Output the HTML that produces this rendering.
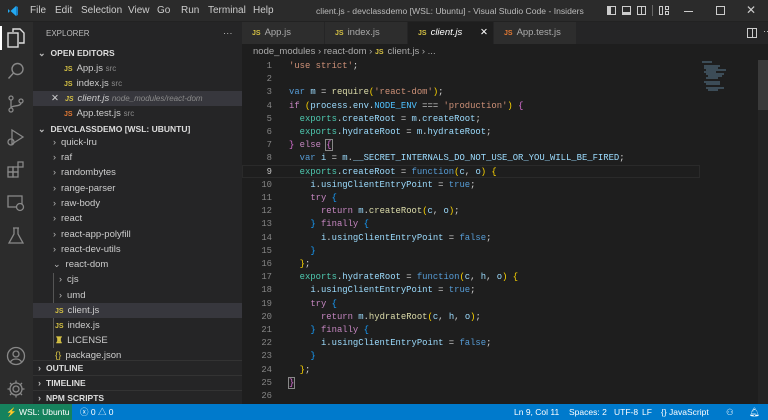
<!DOCTYPE html>
<html><head><meta charset="utf-8"><style>
*{margin:0;padding:0;box-sizing:border-box}
body{width:768px;height:420px;overflow:hidden;background:#1e1e1e;font-family:"Liberation Sans",sans-serif;color:#ccc;position:relative;font-size:9px}
.abs{position:absolute}
#title{left:0;top:0;width:768px;height:22px;background:#2b2b2b;border-bottom:1px solid #222}
#title span.m{position:absolute;top:5px;font-size:10px;color:#ccc}
#act{left:0;top:22px;width:33px;height:382px;background:#2c2c2c}
#side{left:33px;top:22px;width:209px;height:382px;background:#252526}
.row{position:absolute;left:0;width:209px;height:15px;line-height:15px;font-size:9.5px;color:#ccc;white-space:nowrap}
.hdr{font-weight:bold;font-size:8.5px;color:#ddd}
.js{color:#d5c144;font-weight:bold;font-size:7px;margin-right:4px}
.chev{color:#bbb;margin-right:5px;font-size:9px}
.dim{color:#8a8a8a;font-size:8px}
#tabs{left:242px;top:22px;width:526px;height:22px;background:#252526}
.tab{position:absolute;top:0;height:22px;line-height:22px;font-size:9.5px;background:#2d2d2d;color:#aaa;padding-left:10px}
#code{left:242px;top:60px;font-family:"Liberation Mono",monospace;font-size:8.9px;line-height:13.2px;white-space:pre}
.ln{position:absolute;left:0;width:30px;text-align:right;color:#858585}
.cl{position:absolute;left:47px}
.k{color:#569cd6}.p{color:#c586c0}.s{color:#ce9178}.v{color:#9cdcfe}.f{color:#dcdcaa}.t{color:#4ec9b0}.c{color:#4fc1ff}.y{color:#ffd700}.w{color:#d4d4d4}.bl{color:#179fff}.pk{color:#da70d6}
#status{left:0;top:404px;width:768px;height:16px;background:#007acc;font-size:8.5px;color:#fff;line-height:16px}
</style></head><body>
<div id="title" class="abs">
<svg class="abs" style="left:7px;top:5px" width="12" height="12" viewBox="0 0 12 12"><path d="M9 1L3.5 6 9 11V1zM1 4l2 2-2 2z" fill="#23a9f2"/><path d="M9 1l2 1v8l-2 1z" fill="#1b80c4"/></svg>
<span class="m" style="left:30px">File</span><span class="m" style="left:55px">Edit</span><span class="m" style="left:81px">Selection</span><span class="m" style="left:128px">View</span><span class="m" style="left:157px">Go</span><span class="m" style="left:181px">Run</span><span class="m" style="left:208px">Terminal</span><span class="m" style="left:253px">Help</span>
<span class="m" style="left:316px;color:#bbb;font-size:8.6px;top:6px">client.js - devclassdemo [WSL: Ubuntu] - Visual Studio Code - Insiders</span>
<div class="abs" style="left:607px;top:6px;width:9px;height:9px;border:1px solid #ccc;border-left:4px solid #ccc"></div>
<div class="abs" style="left:622px;top:6px;width:9px;height:9px;border:1px solid #ccc;border-bottom:3px solid #ccc"></div>
<div class="abs" style="left:637px;top:6px;width:9px;height:9px;border:1px solid #ccc"></div><div class="abs" style="left:641px;top:6px;width:1px;height:9px;background:#ccc"></div>
<div class="abs" style="left:652px;top:5px;width:1px;height:11px;background:#666"></div>
<div class="abs" style="left:659px;top:6px;width:4px;height:9px;border:1px solid #ccc"></div><div class="abs" style="left:665px;top:6px;width:4px;height:4px;border:1px solid #ccc"></div><div class="abs" style="left:665px;top:11px;width:4px;height:4px;border:1px solid #ccc"></div>
<div class="abs" style="left:684px;top:11px;width:9px;height:1px;background:#ccc"></div>
<div class="abs" style="left:716px;top:6px;width:9px;height:9px;border:1px solid #ccc"></div>
<span class="m" style="left:746px;top:3px;font-size:12px">✕</span>
</div>
<div id="act" class="abs">
<div class="abs" style="left:0;top:4px;width:2px;height:24px;background:#fff"></div>
<svg class="abs" style="left:7px;top:6px" width="18" height="20" viewBox="0 0 18 20" fill="none" stroke="#ddd" stroke-width="1.4"><path d="M6 4V1h7l4 4v10h-5"/><rect x="1" y="5" width="10" height="14"/></svg>
<svg class="abs" style="left:7px;top:40px" width="18" height="18" viewBox="0 0 18 18" fill="none" stroke="#888" stroke-width="1.4"><circle cx="10.5" cy="7" r="5.5"/><path d="M6.5 11L1.5 16.5"/></svg>
<svg class="abs" style="left:7px;top:73px" width="18" height="18" viewBox="0 0 18 18" fill="none" stroke="#888" stroke-width="1.3"><circle cx="4" cy="3" r="2"/><circle cx="4" cy="15" r="2"/><circle cx="14" cy="6" r="2"/><path d="M4 5v8M14 8c0 4-10 2-10 5"/></svg>
<svg class="abs" style="left:7px;top:106px" width="18" height="18" viewBox="0 0 18 18" fill="none" stroke="#888" stroke-width="1.3"><path d="M5 2l11 7-11 7z"/><circle cx="4" cy="14" r="3"/></svg>
<svg class="abs" style="left:7px;top:139px" width="18" height="18" viewBox="0 0 18 18" fill="none" stroke="#888" stroke-width="1.3"><rect x="1" y="6" width="5" height="5"/><rect x="6" y="6" width="5" height="5"/><rect x="1" y="11" width="5" height="5"/><rect x="6" y="11" width="5" height="5"/><rect x="11" y="1" width="5" height="5"/></svg>
<svg class="abs" style="left:7px;top:172px" width="18" height="18" viewBox="0 0 18 18" fill="none" stroke="#888" stroke-width="1.3"><rect x="1" y="2" width="14" height="11"/><circle cx="13" cy="13" r="3.5" fill="#2c2c2c"/></svg>
<svg class="abs" style="left:7px;top:205px" width="18" height="18" viewBox="0 0 18 18" fill="none" stroke="#888" stroke-width="1.3"><path d="M6 1h6M7 1v6L2 16h14L11 7V1"/></svg>
<svg class="abs" style="left:6px;top:324px" width="20" height="20" viewBox="0 0 20 20" fill="none" stroke="#888" stroke-width="1.3"><circle cx="10" cy="10" r="8.5"/><circle cx="10" cy="8" r="3"/><path d="M4.5 16c2-4 9-4 11 0"/></svg>
<svg class="abs" style="left:6px;top:357px" width="20" height="20" viewBox="0 0 20 20" fill="none" stroke="#888" stroke-width="1.3"><circle cx="10" cy="10" r="3"/><path d="M10 1.5v3M10 15.5v3M1.5 10h3M15.5 10h3M4 4l2 2M14 14l2 2M4 16l2-2M14 6l2-2"/><circle cx="10" cy="10" r="6"/></svg>
</div>
<div id="side" class="abs">
<div class="row" style="top:4px;left:13px;font-size:8px;color:#bbb">EXPLORER</div>
<div class="row" style="top:4px;left:190px;color:#bbb">···</div>
<div class="row hdr" style="top:24px;left:5px"><span class="chev">⌄</span>OPEN EDITORS</div>
<div class="row" style="top:39px;left:31px"><span class="js">JS</span>App.js <span class="dim">src</span></div>
<div class="row" style="top:54px;left:31px"><span class="js">JS</span>index.js <span class="dim">src</span></div>
<div class="row" style="top:69px;left:0;background:#37373d;padding-left:18px;font-style:italic"><span style="font-style:normal;margin-right:6px">✕</span><span class="js">JS</span>client.js <span class="dim">node_modules/react-dom</span></div>
<div class="row" style="top:84px;left:31px"><span class="js" style="color:#e37933">JS</span>App.test.js <span class="dim">src</span></div>
<div class="row hdr" style="top:100px;left:5px"><span class="chev">⌄</span>DEVCLASSDEMO [WSL: UBUNTU]</div>
<div class="row" style="top:113px;left:20px"><span class="chev">›</span>quick-lru</div>
<div class="row" style="top:128px;left:20px"><span class="chev">›</span>raf</div>
<div class="row" style="top:143px;left:20px"><span class="chev">›</span>randombytes</div>
<div class="row" style="top:159px;left:20px"><span class="chev">›</span>range-parser</div>
<div class="row" style="top:174px;left:20px"><span class="chev">›</span>raw-body</div>
<div class="row" style="top:189px;left:20px"><span class="chev">›</span>react</div>
<div class="row" style="top:205px;left:20px"><span class="chev">›</span>react-app-polyfill</div>
<div class="row" style="top:220px;left:20px"><span class="chev">›</span>react-dev-utils</div>
<div class="row" style="top:235px;left:20px"><span class="chev">⌄</span>react-dom</div>
<div class="abs" style="left:20px;top:251px;width:1px;height:75px;background:#555"></div>
<div class="row" style="top:250px;left:26px"><span class="chev">›</span>cjs</div>
<div class="row" style="top:266px;left:26px"><span class="chev">›</span>umd</div>
<div class="row" style="top:281px;left:0;background:#37373d;padding-left:22px"><span class="js">JS</span>client.js</div>
<div class="row" style="top:296px;left:22px"><span class="js">JS</span>index.js</div>
<div class="row" style="top:311px;left:22px"><span class="js" style="font-size:9px">♜</span>LICENSE</div>
<div class="row" style="top:326px;left:22px"><span style="color:#d5c144;margin-right:4px">{}</span>package.json</div>
<div class="row hdr" style="top:338px;left:0;padding-left:5px;background:#252526;border-top:1px solid #333"><span class="chev">›</span>OUTLINE</div>
<div class="row hdr" style="top:353px;left:0;padding-left:5px;border-top:1px solid #333"><span class="chev">›</span>TIMELINE</div>
<div class="row hdr" style="top:368px;left:0;padding-left:5px;border-top:1px solid #333"><span class="chev">›</span>NPM SCRIPTS</div>
</div>
<div id="tabs" class="abs">
<div class="tab" style="left:0;width:82px"><span class="js">JS</span>App.js</div>
<div class="tab" style="left:83px;width:82px"><span class="js">JS</span>index.js</div>
<div class="tab" style="left:166px;width:85px;background:#1e1e1e;color:#fff;font-style:italic"><span class="js" style="font-style:normal">JS</span>client.js<span style="position:absolute;left:72px;font-style:normal">✕</span></div>
<div class="tab" style="left:252px;width:82px"><span class="js" style="color:#e37933">JS</span>App.test.js</div>
<div class="abs" style="left:505px;top:6px;width:10px;height:10px;border:1px solid #ccc"></div><div class="abs" style="left:510px;top:6px;width:1px;height:10px;background:#ccc"></div>
<div class="abs" style="left:521px;top:4px;color:#ccc">···</div>
</div>
<div class="abs" style="left:253px;top:46px;font-size:9.5px;color:#aaa">node_modules › react-dom › <span class="js">JS</span>client.js › ...</div>
<div class="abs" style="left:242px;top:165px;width:458px;height:13px;border:1px solid #2a2a2a"></div>
<div id="code" class="abs">
<div class="ln" style="top:0">1</div><div class="cl" style="top:0"><span class="s">'use strict'</span><span class="w">;</span></div>
<div class="ln" style="top:13.2px">2</div>
<div class="ln" style="top:26.4px">3</div><div class="cl" style="top:26.4px"><span class="k">var</span> <span class="v">m</span> <span class="w">=</span> <span class="f">require</span><span class="y">(</span><span class="s">'react-dom'</span><span class="y">)</span><span class="w">;</span></div>
<div class="ln" style="top:39.6px">4</div><div class="cl" style="top:39.6px"><span class="p">if</span> <span class="y">(</span><span class="v">process</span><span class="w">.</span><span class="v">env</span><span class="w">.</span><span class="c">NODE_ENV</span> <span class="w">===</span> <span class="s">'production'</span><span class="y">)</span> <span class="pk">{</span></div>
<div class="ln" style="top:52.8px">5</div><div class="cl" style="top:52.8px">  <span class="t">exports</span><span class="w">.</span><span class="v">createRoot</span> <span class="w">=</span> <span class="v">m</span><span class="w">.</span><span class="v">createRoot</span><span class="w">;</span></div>
<div class="ln" style="top:66px">6</div><div class="cl" style="top:66px">  <span class="t">exports</span><span class="w">.</span><span class="v">hydrateRoot</span> <span class="w">=</span> <span class="v">m</span><span class="w">.</span><span class="v">hydrateRoot</span><span class="w">;</span></div>
<div class="ln" style="top:79.2px">7</div><div class="cl" style="top:79.2px"><span class="pk">}</span> <span class="p">else</span> <span class="pk" style="outline:1px solid #888">{</span></div>
<div class="ln" style="top:92.4px">8</div><div class="cl" style="top:92.4px">  <span class="k">var</span> <span class="v">i</span> <span class="w">=</span> <span class="v">m</span><span class="w">.</span><span class="v">__SECRET_INTERNALS_DO_NOT_USE_OR_YOU_WILL_BE_FIRED</span><span class="w">;</span></div>
<div class="ln" style="top:105.6px;color:#c6c6c6">9</div><div class="cl" style="top:105.6px">  <span class="t">exports</span><span class="w">.</span><span class="v">createRoot</span> <span class="w">=</span> <span class="k">function</span><span class="y">(</span><span class="v">c</span><span class="w">,</span> <span class="v">o</span><span class="y">)</span> <span class="y">{</span></div>
<div class="ln" style="top:118.8px">10</div><div class="cl" style="top:118.8px">    <span class="v">i</span><span class="w">.</span><span class="v">usingClientEntryPoint</span> <span class="w">=</span> <span class="k">true</span><span class="w">;</span></div>
<div class="ln" style="top:132px">11</div><div class="cl" style="top:132px">    <span class="p">try</span> <span class="bl">{</span></div>
<div class="ln" style="top:145.2px">12</div><div class="cl" style="top:145.2px">      <span class="p">return</span> <span class="v">m</span><span class="w">.</span><span class="f">createRoot</span><span class="y">(</span><span class="v">c</span><span class="w">,</span> <span class="v">o</span><span class="y">)</span><span class="w">;</span></div>
<div class="ln" style="top:158.4px">13</div><div class="cl" style="top:158.4px">    <span class="bl">}</span> <span class="p">finally</span> <span class="bl">{</span></div>
<div class="ln" style="top:171.6px">14</div><div class="cl" style="top:171.6px">      <span class="v">i</span><span class="w">.</span><span class="v">usingClientEntryPoint</span> <span class="w">=</span> <span class="k">false</span><span class="w">;</span></div>
<div class="ln" style="top:184.8px">15</div><div class="cl" style="top:184.8px">    <span class="bl">}</span></div>
<div class="ln" style="top:198px">16</div><div class="cl" style="top:198px">  <span class="y">}</span><span class="w">;</span></div>
<div class="ln" style="top:211.2px">17</div><div class="cl" style="top:211.2px">  <span class="t">exports</span><span class="w">.</span><span class="v">hydrateRoot</span> <span class="w">=</span> <span class="k">function</span><span class="y">(</span><span class="v">c</span><span class="w">,</span> <span class="v">h</span><span class="w">,</span> <span class="v">o</span><span class="y">)</span> <span class="y">{</span></div>
<div class="ln" style="top:224.4px">18</div><div class="cl" style="top:224.4px">    <span class="v">i</span><span class="w">.</span><span class="v">usingClientEntryPoint</span> <span class="w">=</span> <span class="k">true</span><span class="w">;</span></div>
<div class="ln" style="top:237.6px">19</div><div class="cl" style="top:237.6px">    <span class="p">try</span> <span class="bl">{</span></div>
<div class="ln" style="top:250.8px">20</div><div class="cl" style="top:250.8px">      <span class="p">return</span> <span class="v">m</span><span class="w">.</span><span class="f">hydrateRoot</span><span class="y">(</span><span class="v">c</span><span class="w">,</span> <span class="v">h</span><span class="w">,</span> <span class="v">o</span><span class="y">)</span><span class="w">;</span></div>
<div class="ln" style="top:264px">21</div><div class="cl" style="top:264px">    <span class="bl">}</span> <span class="p">finally</span> <span class="bl">{</span></div>
<div class="ln" style="top:277.2px">22</div><div class="cl" style="top:277.2px">      <span class="v">i</span><span class="w">.</span><span class="v">usingClientEntryPoint</span> <span class="w">=</span> <span class="k">false</span><span class="w">;</span></div>
<div class="ln" style="top:290.4px">23</div><div class="cl" style="top:290.4px">    <span class="bl">}</span></div>
<div class="ln" style="top:303.6px">24</div><div class="cl" style="top:303.6px">  <span class="y">}</span><span class="w">;</span></div>
<div class="ln" style="top:316.8px">25</div><div class="cl" style="top:316.8px"><span class="pk" style="outline:1px solid #888">}</span></div>
<div class="ln" style="top:330px">26</div>
</div>
<svg class="abs" style="left:700px;top:60px" width="50" height="40"><g stroke-width="1"><path d="M2 2h10M4 6h16M4 8h14M6 10h20M4 12h12M6 14h18M8 16h14M6 18h12M4 22h16M6 24h14M6 28h18M8 30h10" stroke="#5a7a90"/></g></svg>
<div class="abs" style="left:758px;top:60px;width:10px;height:344px;background:#242424"></div>
<div class="abs" style="left:758px;top:60px;width:10px;height:50px;background:#3a3a3a"></div>
<div id="status" class="abs">
<div class="abs" style="left:0;top:0;width:72px;height:16px;background:#16825d;padding-left:6px">⚡ WSL: Ubuntu</div>
<div class="abs" style="left:80px">ⓧ 0 △ 0</div>
<div class="abs" style="left:514px">Ln 9, Col 11</div>
<div class="abs" style="left:569px">Spaces: 2</div>
<div class="abs" style="left:614px">UTF-8</div>
<div class="abs" style="left:642px">LF</div>
<div class="abs" style="left:661px">{} JavaScript</div>
<div class="abs" style="left:726px">⚇</div>
<div class="abs" style="left:749px">🔔︎</div>
</div>
</body></html>
